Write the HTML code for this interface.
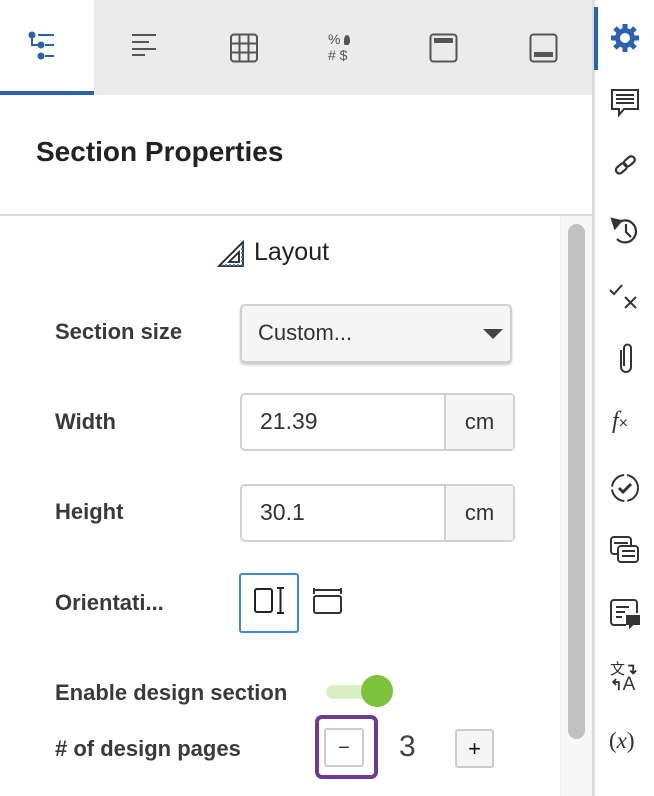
<!DOCTYPE html>
<html><head><meta charset="utf-8"><style>
*{box-sizing:border-box;margin:0;padding:0}
body{width:654px;height:796px;overflow:hidden;background:#fff;font-family:"Liberation Sans",sans-serif;position:relative;color:#333}
.a{position:absolute}
.lbl{position:absolute;left:55px;font-weight:bold;font-size:22px;color:#3a3a3a}
.inp{position:absolute;left:240px;width:275px;height:58px;border:2px solid #d0d0d0;border-radius:5px;background:#fff}
.inp .v{position:absolute;left:18px;top:13px;font-size:23px;color:#333}
.inp .u{position:absolute;right:0;top:0;bottom:0;width:69px;border-left:2px solid #d0d0d0;background:#f5f5f5;font-size:22px;text-align:center;line-height:54px;color:#333}
.ic{position:absolute;left:608px;width:34px;height:34px}
</style></head><body>
<div class="a" style="left:94px;top:0;width:500px;height:95px;background:#ebebeb"></div>
<div class="a" style="left:0;top:91px;width:94px;height:4px;background:#2a62b0"></div>
<div class="a" style="left:592px;top:0;width:3px;height:796px;background:#ddd"></div>
<div class="a" style="left:594px;top:7px;width:4px;height:63px;background:#2a62b0"></div>
<svg class="a" style="left:26px;top:28px" width="36" height="36" viewBox="0 0 36 36" fill="none" stroke="#2a62b0" stroke-width="2"><circle cx="6" cy="7" r="2.5" fill="#2a62b0"/><circle cx="15" cy="17" r="2.5" fill="#2a62b0"/><circle cx="15" cy="28" r="2.5" fill="#2a62b0"/><path d="M6 7v10h9M12 7h16M19 17h9M19 28h9"/></svg>
<svg class="a" style="left:130px;top:33px" width="28" height="24" stroke="#555" stroke-width="2"><path d="M2 2h24M2 9h17M2 16h24M2 22h13"/></svg>
<svg class="a" style="left:229px;top:33px" width="30" height="30" fill="none" stroke="#555" stroke-width="2"><rect x="2" y="1.5" width="26" height="27" rx="3"/><path d="M10.5 2v26M19.5 2v26M2 10.5h26M2 19.5h26"/></svg>
<div class="a" style="left:328px;top:31px;font-size:14px;color:#555;line-height:16px">%&nbsp;<span style="display:inline-block;width:6px;height:10px;border-radius:50% 50% 40% 20%;background:#555;vertical-align:-1px"></span><br>#&nbsp;$</div>
<svg class="a" style="left:429px;top:33px" width="30" height="30" fill="none" stroke="#555" stroke-width="2"><rect x="1.5" y="1.5" width="26" height="27" rx="3"/><rect x="5" y="5" width="19" height="5" fill="#555" stroke="none"/></svg>
<svg class="a" style="left:529px;top:33px" width="30" height="30" fill="none" stroke="#555" stroke-width="2"><rect x="1.5" y="1.5" width="26" height="27" rx="3"/><rect x="5" y="19" width="19" height="5" fill="#555" stroke="none"/></svg>
<div class="a" style="left:36px;top:136px;font-size:28px;font-weight:bold;color:#222">Section Properties</div>
<div class="a" style="left:0;top:214px;width:592px;height:2px;background:#ddd"></div>
<div class="a" style="left:560px;top:216px;width:32px;height:580px;background:#f7f7f7;border-left:1px solid #eee"></div>
<div class="a" style="left:568px;top:224px;width:17px;height:515px;background:#c1c1c1;border-radius:9px"></div>
<svg class="a" style="left:217px;top:240px" width="28" height="28" fill="none" stroke="#222" stroke-width="1.8"><path d="M2 26L26 2V26Z"/><path d="M12 22L22 12V22Z"/><path d="M4 25h21V4" stroke="#3a7fe0" stroke-dasharray="2 2"/></svg>
<div class="a" style="left:254px;top:238px;font-size:25px;color:#222">Layout</div>
<div class="lbl" style="top:319px">Section size</div>
<div class="a" style="left:240px;top:304px;width:272px;height:59px;border:2px solid #d0d0d0;border-radius:5px;background:#f5f5f5;box-shadow:0 2px 2px #ccc"></div>
<div class="a" style="left:258px;top:320px;font-size:22px;color:#333">Custom...</div>
<div class="a" style="left:483px;top:329px;border-left:10px solid transparent;border-right:10px solid transparent;border-top:10px solid #444"></div>
<div class="lbl" style="top:409px">Width</div>
<div class="inp" style="top:393px"><div class="v">21.39</div><div class="u">cm</div></div>
<div class="lbl" style="top:499px">Height</div>
<div class="inp" style="top:484px"><div class="v">30.1</div><div class="u">cm</div></div>
<div class="lbl" style="top:590px">Orientati...</div>
<div class="a" style="left:239px;top:573px;width:60px;height:60px;border:2px solid #3a8ae0;border-radius:3px"></div>
<svg class="a" style="left:253px;top:586px" width="34" height="32" fill="none" stroke="#222" stroke-width="2"><rect x="2" y="3" width="17" height="23" rx="2"/><path d="M24 2h7M27.5 2v25M24 27h7"/></svg>
<svg class="a" style="left:311px;top:586px" width="34" height="32" fill="none" stroke="#333" stroke-width="2"><rect x="3" y="10" width="27" height="17" rx="2"/><path d="M3 2v6M30 2v6M3 4h27"/></svg>
<div class="lbl" style="top:680px">Enable design section</div>
<div class="a" style="left:326px;top:685px;width:54px;height:14px;border-radius:7px;background:#d9efc3"></div>
<div class="a" style="left:361px;top:675px;width:32px;height:32px;border-radius:50%;background:#7cc23a"></div>
<div class="lbl" style="top:736px">#  of design pages</div>
<div class="a" style="left:315px;top:715px;width:63px;height:64px;border:4px solid #6c3b96;border-radius:7px"></div>
<div class="a" style="left:324px;top:728px;width:40px;height:39px;border:2px solid #ccc;border-radius:3px;text-align:center;line-height:36px;font-size:20px">−</div>
<div class="a" style="left:399px;top:730px;font-size:30px;color:#444">3</div>
<div class="a" style="left:455px;top:729px;width:39px;height:39px;border:2px solid #ccc;border-radius:3px;background:#f5f5f5;text-align:center;line-height:35px;font-size:22px;color:#111">+</div>
<svg class="ic" style="top:21px" viewBox="0 0 34 34"><g fill="#2a62b0"><circle cx="17" cy="17" r="10"/><g stroke="#2a62b0" stroke-width="5"><path d="M17 3v28M3 17h28M7 7l20 20M27 7L7 27"/></g></g><circle cx="17" cy="17" r="5" fill="#fff"/></svg>
<svg class="ic" style="top:86px" viewBox="0 0 34 34" fill="none" stroke="#333" stroke-width="2"><path d="M4 4h26v19H16l-5 6v-6H4z"/><path d="M8 9h18M8 13h18M8 17h18"/></svg>
<svg class="ic" style="top:148px" viewBox="0 0 34 34" fill="none" stroke="#333" stroke-width="2.2"><rect x="7" y="17" width="12" height="7" rx="3.5" transform="rotate(-40 13 20)"/><rect x="15" y="10" width="12" height="7" rx="3.5" transform="rotate(-40 21 13)"/></svg>
<svg class="ic" style="top:213px" viewBox="0 0 34 34" fill="none" stroke="#333" stroke-width="2.2"><path d="M8 12A11 11 0 1 1 9 26"/><path d="M18 11v8l5 5"/><path d="M4 6l9 2-6 7z" fill="#333"/></svg>
<svg class="ic" style="top:277px" viewBox="0 0 34 34" fill="none" stroke="#333" stroke-width="2"><path d="M2 13l4 4 8-9M17 20l11 11M28 20L17 31"/></svg>
<svg class="ic" style="top:341px" viewBox="0 0 34 34" fill="none" stroke="#333" stroke-width="2"><path d="M13 9v17a5 5 0 0 0 10 0V7a3.5 3.5 0 0 0-7 0v18"/></svg>
<div class="a" style="left:612px;top:408px;font-size:24px;font-style:italic;font-family:'Liberation Serif',serif;color:#333">f<span style="font-size:16px;font-style:normal;font-family:'Liberation Sans'">×</span></div>
<svg class="ic" style="top:471px" viewBox="0 0 34 34" fill="none" stroke="#333" stroke-width="2"><circle cx="17" cy="17" r="13" stroke-dasharray="18 3"/><path d="M11 17l4 4 8-8" stroke-width="3"/></svg>
<svg class="ic" style="top:533px" viewBox="0 0 34 34" fill="none" stroke="#333" stroke-width="2"><rect x="3" y="4" width="20" height="17" rx="3"/><rect x="10" y="13" width="20" height="16" rx="3" fill="#fff"/><path d="M6 10h14M14 18h13M14 23h13"/></svg>
<svg class="ic" style="top:597px" viewBox="0 0 34 34" fill="none" stroke="#333" stroke-width="2"><path d="M18 28H6a3 3 0 0 1-3-3V6a3 3 0 0 1 3-3h20a3 3 0 0 1 3 3v10"/><path d="M8 10h13M8 15h9M8 20h6"/><path d="M19 19h12v8h-6l-3 3v-3h-3z" fill="#333"/></svg>
<div class="a" style="left:610px;top:662px;font-size:15px;line-height:15px;color:#333;font-family:'Liberation Sans','Noto Sans CJK SC',sans-serif">文<b>↴</b><br><b>↰</b><span style="font-size:19px">A</span></div>
<div class="a" style="left:609px;top:728px;font-size:23px;color:#333;font-family:'Liberation Serif',serif">(<i>x</i>)</div>
</body></html>
